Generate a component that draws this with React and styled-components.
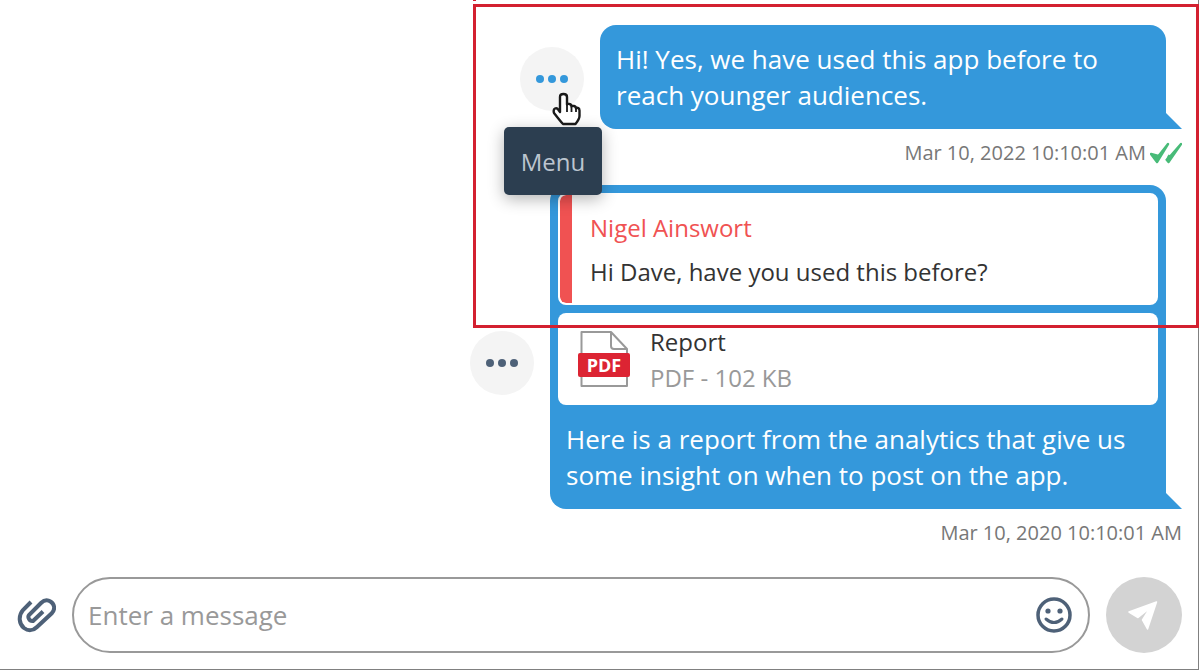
import React from 'react';
import styled, { createGlobalStyle } from 'styled-components';

const GlobalStyle = createGlobalStyle`
	html, body {
		margin: 0;
		padding: 0;
		background: #fff;
		font-family: "Open Sans", "Liberation Sans", sans-serif;
	}
`

const Page = styled.div`
	position: relative;
	box-sizing: border-box;
	width: 1199px;
	height: 670px;
	display: flex;
	flex-direction: column;
	background: #fff;
	border-right: 1px solid #808080;
	border-bottom: 1px solid #808080;
`

const MessageList = styled.div`
	flex: 1;
	min-height: 0;
	display: flex;
	flex-direction: column;
	padding-right: 16px;
`

const ClippedStamp = styled.div`
	height: 3px;
	margin-bottom: 22px;
	padding-left: 480px;
	display: flex;
	align-items: flex-end;
	overflow: hidden;
	font-size: 20px;
	line-height: 28px;
	color: #777;
	white-space: nowrap;
`

const Row = styled.div`
	display: flex;
	justify-content: flex-end;
	align-items: flex-start;
	gap: 16px;
`

const Bubble = styled.div`
	position: relative;
	box-sizing: border-box;
	width: ${p => p.$width}px;
	margin-right: 16px;
	padding: ${p => p.$pad}px;
	background: #3498db;
	color: #fff;
	border-radius: 16px 16px 0 16px;
	font-size: 26px;
	line-height: 36px;

	&::after {
		content: "";
		position: absolute;
		right: -16px;
		bottom: 0;
		border-style: solid;
		border-width: 16px 0 0 16px;
		border-color: transparent transparent transparent #3498db;
	}
`

const BubbleText = styled.div`
	padding: ${p => p.$inner ? '16px 8px 8px' : '0'};
`

const Stamp = styled.div`
	display: flex;
	justify-content: flex-end;
	align-items: center;
	gap: 4px;
	height: 28px;
	margin: 10px 0 18px;
	font-size: 20px;
	line-height: 28px;
	color: #777;
`

const MenuWrap = styled.div`
	position: relative;
	margin-top: ${p => p.$top}px;
`

const MenuButton = styled.div`
	width: 64px;
	height: 64px;
	border-radius: 50%;
	background: #f4f4f4;
	display: flex;
	align-items: center;
	justify-content: center;
	gap: 4px;
`

const Dot = styled.span`
	width: 8px;
	height: 8px;
	border-radius: 50%;
	background: ${p => p.$color};
`

const Tooltip = styled.div`
	position: absolute;
	z-index: 3;
	left: -16px;
	top: 80px;
	width: 98px;
	height: 68px;
	display: flex;
	align-items: center;
	justify-content: center;
	border-radius: 5px;
	background: #2c3e50;
	color: #bcc5cf;
	font-size: 24px;
	box-shadow: 0 4px 16px rgba(0, 0, 0, 0.3);
`

const Cursor = styled.svg`
	position: absolute;
	z-index: 4;
	left: 32px;
	top: 45px;
`

const ReplyCard = styled.div`
	box-sizing: border-box;
	height: 112px;
	margin-bottom: 8px;
	display: flex;
	background: #fff;
	border: 2px solid #fff;
	border-radius: 8px;
	overflow: hidden;
	font-size: 24px;
`

const ReplyBar = styled.div`
	width: 12px;
	border-radius: 6px 0 0 6px;
	background: #f05252;
`

const ReplyBody = styled.div`
	padding: 15px 0 0 18px;
`

const ReplyName = styled.div`
	color: #f05252;
	line-height: 36px;
	margin-bottom: 8px;
`

const ReplyText = styled.div`
	color: #333;
	line-height: 36px;
`

const FileCard = styled.div`
	box-sizing: border-box;
	height: 92px;
	display: flex;
	gap: 20px;
	padding: 11px 0 0 20px;
	background: #fff;
	border-radius: 8px;
	font-size: 24px;
	line-height: 36px;
`

const FileIcon = styled.div`
	position: relative;
	width: 52px;
	height: 56px;
	margin-top: 7px;
`

const FileBadge = styled.span`
	position: absolute;
	left: 0;
	top: 22px;
	width: 52px;
	height: 24px;
	border-radius: 2px;
	background: #dc2433;
	color: #fff;
	font-size: 18px;
	font-weight: 700;
	line-height: 24px;
	text-align: center;
`

const FileName = styled.div`
	color: #333;
`

const FileMeta = styled.div`
	color: #999;
`

const Composer = styled.div`
	display: flex;
	align-items: center;
	gap: 16px;
	padding: 0 16px 16px 17px;
`

const IconSlot = styled.div`
	width: 39px;
	height: 36px;
	display: flex;
	margin-top: 2px;
`

const InputPill = styled.div`
	flex: 1;
	box-sizing: border-box;
	height: 76px;
	display: flex;
	align-items: center;
	padding: 0 16px 0 14px;
	border: 2px solid #999;
	border-radius: 38px;
`

const MessageInput = styled.input`
	flex: 1;
	min-width: 0;
	border: 0;
	outline: 0;
	padding: 0;
	font-family: inherit;
	font-size: 26px;
	color: #333;
	background: transparent;

	&::placeholder {
		color: #999;
		opacity: 1;
	}
`

const SendButton = styled.div`
	width: 76px;
	height: 76px;
	border-radius: 50%;
	background: #d3d3d3;
	display: flex;
`

const Highlight = styled.div`
	position: absolute;
	z-index: 5;
	left: 473px;
	top: 4px;
	width: 726px;
	height: 324px;
	box-sizing: border-box;
	border: 3px solid #d32030;
	pointer-events: none;

	&::before {
		content: "";
		position: absolute;
		left: -3px;
		top: -7px;
		width: 3px;
		height: 1px;
		background: #d32030;
	}
`

const MenuDots = ({ color }) => (
	<MenuButton>
		<Dot $color={color} />
		<Dot $color={color} />
		<Dot $color={color} />
	</MenuButton>
)

const HandCursor = () => (
	<Cursor width="30" height="34" viewBox="0 0 30 34">
		<path
			d="M8 20 L8 5 Q8 2 11.4 2 Q15 2 15 5 L15 12.5 Q15.5 11.5 17.5 12 Q19.5 12.4 19.5 14.5 Q20 13.5 22 14 Q24 14.5 24 16.5 Q25 15.5 26 16 Q27.5 16.5 27.5 18.5 L27.5 24 Q27.5 27 23.5 32 L11 32 Q9 30 2 21 Q1 17.5 3 16.5 Q5 15.5 6.5 18 Z"
			fill="#fff"
			stroke="#1a1a1a"
			strokeWidth="2.4"
			strokeLinejoin="round"
		/>
		<path d="M15 13 L15 20 M19.5 14.5 L19.5 20 M24 16.5 L24 20" fill="none" stroke="#1a1a1a" strokeWidth="1.8" />
	</Cursor>
)

const DoubleCheck = () => (
	<svg width="32" height="22" viewBox="0 0 32 22">
		<path d="M1 12 L7 20 L18 2 L8.5 14 Z M16 17 L18.5 20 L31 2 L20 14.5 L18 13.5" fill="#48bb78" stroke="#48bb78" strokeWidth="2.4" strokeLinejoin="round" />
	</svg>
)

const FilePage = () => (
	<svg width="52" height="56" viewBox="0 0 52 56">
		<path d="M3.5 1 L33 1 L49 18 L49 55 L3.5 55 Z M33 1 L33 15 Q33 18 36 18 L49 18" fill="none" stroke="#999" strokeWidth="2" strokeLinejoin="round" />
	</svg>
)

const PaperclipIcon = () => (
	<svg width="39" height="36" viewBox="0 0 39 36">
		<path
			d="M14 4 L6 12 C1 18 2 26 7 30 C11 33 16 33 20 29 L35 15 C38.5 11 37.5 6 33.5 3.5 C30.5 1.5 27 2 24 5 L12 17 C10.5 19 12 23.5 16 23 L26 13.5"
			fill="none"
			stroke="#4e6178"
			strokeWidth="4"
		/>
	</svg>
)

const SmileIcon = () => (
	<svg width="36" height="36" viewBox="0 0 36 36">
		<circle cx="18" cy="18" r="16" fill="none" stroke="#4e6178" strokeWidth="3.5" />
		<circle cx="12" cy="14" r="2.6" fill="#4e6178" />
		<circle cx="24" cy="14" r="2.6" fill="#4e6178" />
		<path d="M10 22 Q18 29 26 22" fill="none" stroke="#4e6178" strokeWidth="3" strokeLinecap="round" />
	</svg>
)

const PlaneIcon = () => (
	<svg width="76" height="76" viewBox="0 0 76 76">
		<path d="M50.5 25 L23 35 L32 40.5 L44 31 L36.5 43 L41.5 52 Z" fill="#fff" stroke="#fff" strokeWidth="1.5" strokeLinejoin="round" />
	</svg>
)

export default function App() {
	return (
		<Page>
			<GlobalStyle />
			<MessageList>
				<ClippedStamp>Mar 10, 2020 10:10:01 AM</ClippedStamp>
				<Row>
					<MenuWrap $top={22}>
						<MenuDots color="#3498db" />
						<HandCursor />
						<Tooltip>Menu</Tooltip>
					</MenuWrap>
					<Bubble $width={566} $pad={16}>
						<BubbleText>Hi! Yes, we have used this app before to reach younger audiences.</BubbleText>
					</Bubble>
				</Row>
				<Stamp>Mar 10, 2022 10:10:01 AM <DoubleCheck /></Stamp>
				<Row>
					<MenuWrap $top={146}>
						<MenuDots color="#4e6178" />
					</MenuWrap>
					<Bubble $width={616} $pad={8}>
						<ReplyCard>
							<ReplyBar />
							<ReplyBody>
								<ReplyName>Nigel Ainswort</ReplyName>
								<ReplyText>Hi Dave, have you used this before?</ReplyText>
							</ReplyBody>
						</ReplyCard>
						<FileCard>
							<FileIcon>
								<FilePage />
								<FileBadge>PDF</FileBadge>
							</FileIcon>
							<div>
								<FileName>Report</FileName>
								<FileMeta>PDF - 102 KB</FileMeta>
							</div>
						</FileCard>
						<BubbleText $inner>Here is a report from the analytics that give us some insight on when to post on the app.</BubbleText>
					</Bubble>
				</Row>
				<Stamp>Mar 10, 2020 10:10:01 AM</Stamp>
			</MessageList>
			<Composer>
				<IconSlot><PaperclipIcon /></IconSlot>
				<InputPill>
					<MessageInput placeholder="Enter a message" />
					<SmileIcon />
				</InputPill>
				<SendButton><PlaneIcon /></SendButton>
			</Composer>
			<Highlight />
		</Page>
	)
}
